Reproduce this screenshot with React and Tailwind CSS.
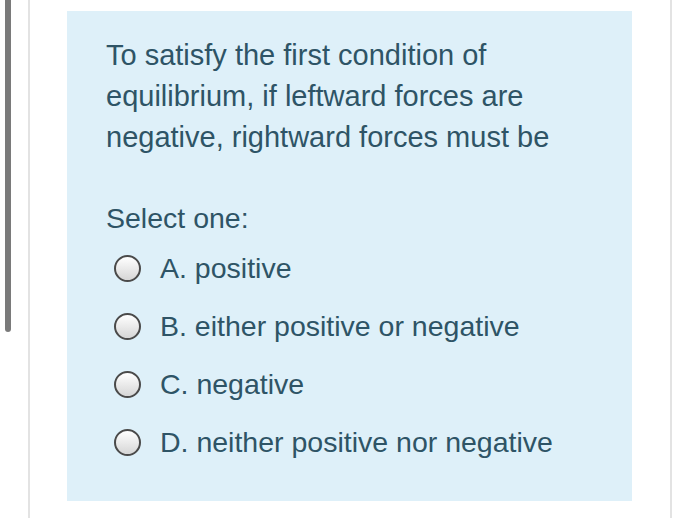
const options = [
  'A. positive',
  'B. either positive or negative',
  'C. negative',
  'D. neither positive nor negative',
]

const Radio = () => (
  <span className="w-[27px] h-[27px] rounded-full border-[2.5px] border-[#4a4a4a] bg-gradient-to-b from-white to-[#d6d6d6] flex-shrink-0" />
)

export default function App() {
  return (
    <div className="w-[700px] h-[518px] bg-white flex overflow-hidden" style={{ fontFamily: '"Liberation Sans", Arial, sans-serif' }}>
      {/* scroll bar */}
      <div className="ml-[5px] w-[6px] h-[332px] bg-[#7a7a7a] rounded-b-[3px]" />

      {/* page frame */}
      <div className="ml-[17px] w-[644px] h-full border-x-2 border-[#e3e3e3] pt-[11px] pl-[37px]">
        <div className="w-[565px] h-[490px] bg-[#def0f9] pl-[39px] pt-[24px] text-[#2e5466]">
          <p className="text-[29px] leading-[41px]">
            To satisfy the first condition of equilibrium, if leftward forces are negative, rightward forces must be
          </p>

          <p className="mt-[40px] text-[28.5px] leading-[41px]">Select one:</p>

          <div className="flex flex-col">
            {options.map(opt => (
              <label key={opt} className="h-[58px] flex items-center gap-[19px] pl-[8px] text-[28.5px]">
                <Radio />
                <span>{opt}</span>
              </label>
            ))}
          </div>
        </div>
      </div>
    </div>
  )
}
